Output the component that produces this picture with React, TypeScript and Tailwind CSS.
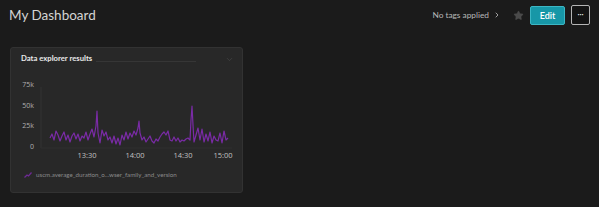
import { Star, ChevronRight, ChevronDown } from 'lucide-react';

const points: [number, number][] = [
  [50, 138], [52, 134], [54, 140], [56, 131], [58, 135], [60, 141], [62, 136], [64, 132], [66, 140], [68, 135],
  [70, 142], [72, 136], [74, 133], [76, 139], [78, 134], [80, 141], [82, 136], [84, 138], [86, 132], [88, 140],
  [90, 134], [92, 129], [94, 137], [96, 126], [97, 111], [98, 133], [100, 143], [102, 130], [104, 136], [106, 132],
  [108, 140], [110, 137], [112, 143], [114, 136], [116, 144], [118, 138], [120, 145], [122, 135], [124, 140], [126, 132],
  [128, 139], [130, 133], [132, 137], [134, 131], [136, 135], [138, 128], [139, 121], [140, 133], [142, 140], [144, 137],
  [146, 142], [148, 139], [150, 136], [152, 141], [154, 143], [156, 139], [158, 141], [160, 137], [162, 134], [164, 132],
  [166, 135], [168, 131], [170, 140], [172, 141], [174, 137], [176, 141], [178, 138], [180, 142], [182, 140], [184, 141],
  [186, 139], [188, 138], [190, 140], [191, 120], [192, 106], [193, 125], [194, 142], [196, 135], [198, 128], [200, 140],
  [202, 129], [204, 142], [206, 134], [208, 141], [210, 132], [212, 143], [214, 136], [216, 140], [218, 141], [220, 133],
  [222, 143], [224, 131], [226, 140], [228, 138],
];

// chart svg sits at page x 10, y 75
const OX = 10;
const OY = 75;

function Chart() {
  const line = points.map(([x, y]) => `${x - OX},${y - OY}`).join(' ');
  const yLabels: [string, number][] = [['75k', 84], ['50k', 105], ['25k', 125], ['0', 146]];
  const xLabels: [string, number][] = [['13:30', 87], ['14:00', 135], ['14:30', 183], ['15:00', 223]];
  return (
    <svg width="233" height="87" viewBox="0 0 233 87" className="block" style={{ fontFamily: '"Open Sans", sans-serif' }}>
      <line x1={41 - OX} y1={87 - OY} x2={41 - OX} y2={148 - OY} stroke="#333" strokeWidth="1" />
      <line x1={41 - OX} y1={148 - OY} x2={232 - OX} y2={148 - OY} stroke="#2f2f2f" strokeWidth="1" />
      {yLabels.map(([t, y]) => (
        <text key={t} x={34 - OX} y={y - OY + 2.5} textAnchor="end" fontSize="7" fill="#b0b0b0">
          {t}
        </text>
      ))}
      {xLabels.map(([t, x]) => (
        <text key={t} x={x - OX} y={158 - OY} textAnchor="middle" fontSize="7.5" fill="#c0c0c0">
          {t}
        </text>
      ))}
      <polyline points={line} fill="none" stroke="#7a2ba6" strokeWidth="1.2" strokeLinejoin="round" />
    </svg>
  );
}

export default function App() {
  return (
    <div className="w-[599px] h-[207px] bg-[#1b1b1b] overflow-hidden" style={{ fontFamily: 'Lato, sans-serif' }}>
      <div className="flex items-center h-[30px] pl-[9px] pr-[9px]">
        <h1 className="text-[13.5px] text-[#d4d4d4] leading-none mt-[1px]">My Dashboard</h1>
        <div className="ml-auto flex items-center">
          <span className="text-[8.3px] text-[#b8b8b8] flex items-center">
            No tags applied
            <ChevronRight className="w-[8px] h-[8px] ml-[4px]" strokeWidth={2.5} />
          </span>
          <Star className="w-[11px] h-[11px] ml-[12px] text-[#4a4a4a]" fill="#4a4a4a" strokeWidth={1} />
          <button className="ml-[6px] w-[35px] h-[19px] bg-[#1797a7] border border-[#3cb6c4] rounded-[2px] text-[9px] font-semibold text-white leading-none">
            Edit
          </button>
          <button className="ml-[6px] w-[19px] h-[20px] bg-[#141414] border border-[#b5b5b5] rounded-[2px] text-[8px] text-white leading-none flex items-center justify-center pb-[3px]">
            ···
          </button>
        </div>
      </div>

      <div className="ml-[10px] mt-[17px] w-[233px] h-[146px] bg-[#282828] border border-[#323232] rounded-[3px] relative">
        <div className="flex items-center h-[20px] pl-[10px] pr-[8px] pt-[2px]">
          <span className="text-[7.7px] font-bold text-[#e8e8e8] leading-none">Data explorer results</span>
          <div className="ml-[4px] w-[100px] h-px bg-[#363636] mt-[5px]" />
          <ChevronDown className="ml-auto w-[9px] h-[9px] text-[#444]" strokeWidth={2} />
        </div>
        <div className="mt-[7px] -ml-px">
          <Chart />
        </div>
        <div className="flex items-center pl-[13px] mt-[10px]">
          <svg width="8" height="6" viewBox="0 0 8 6" className="block">
            <polyline points="0.5,5.5 3,3 4.5,4 7.5,0.5" fill="none" stroke="#6d2a94" strokeWidth="1.3" />
          </svg>
          <span className="ml-[4px] text-[6.2px] text-[#8a8a8a] leading-none">
            uscm.average_duration_o...wser_family_and_version
          </span>
        </div>
      </div>
    </div>
  );
}
